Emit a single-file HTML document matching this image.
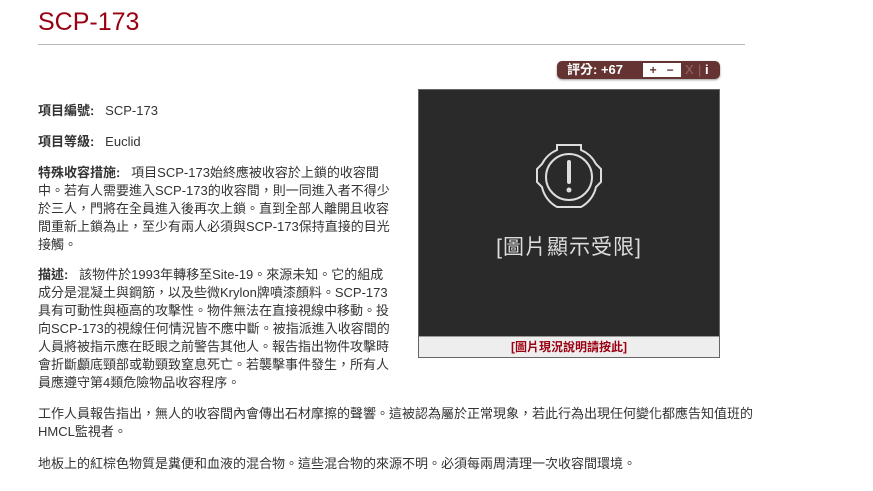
<!DOCTYPE html>
<html><head><meta charset="utf-8"><style>
html,body{margin:0;padding:0;width:873px;height:491px;overflow:hidden;background:#fff;}
body{font-family:"Liberation Sans","Noto Sans CJK TC",sans-serif;font-size:13px;color:#333;position:relative;}
h1{position:absolute;left:38px;top:6px;margin:0;font-weight:normal;font-size:25px;color:#901;line-height:32px;}
.rule{position:absolute;left:38px;top:44px;width:707px;height:1px;background:#bbb;}
.rate{position:absolute;left:557px;top:61px;width:163px;height:18px;background:#633;border-radius:5px;color:#fff;font-weight:bold;font-size:13px;line-height:18px;box-shadow:0 1px 2px #999;}
.rate .l{position:absolute;left:10px;top:0;}
.pmb{position:absolute;left:86px;top:2px;width:38px;height:14px;background:#fff;color:#633;font-size:12px;line-height:14px;}
.x{position:absolute;left:128px;top:0;color:#966;font-weight:normal;}
.i{position:absolute;left:148px;top:0;}
.img{position:absolute;left:418px;top:89px;width:300px;height:267px;border:1px solid #666;background:#2a2a2a;}
.cap{position:absolute;left:0;bottom:0;width:300px;height:20px;background:#eee;border-top:1px solid #999;text-align:center;color:#901;font-weight:bold;font-size:12px;line-height:20px;}
.ptxt{position:absolute;left:0;top:141px;width:300px;text-align:center;color:#ddd;font-size:21px;letter-spacing:1px;}
p{position:absolute;left:38px;margin:0;line-height:18px;white-space:nowrap;}
b{color:#333;}
</style></head><body>
<h1>SCP-173</h1>
<div class="rule"></div>
<div class="rate"><span class="l">評分: +67</span><div class="pmb">&nbsp; + &nbsp;&nbsp;−</div><span class="x">X</span><span style="position:absolute;left:141px;color:#966;font-weight:normal">|</span><span class="i">i</span></div>
<div class="img">
<svg style="position:absolute;left:117px;top:54px" width="66" height="66" viewBox="0 0 66 66" fill="none" stroke="#ddd" stroke-width="2">
<path d="M21 6 L21 1 L45 1 L45 6 A30 30 0 0 1 60 20 L65 25 L65 38 L60 43 A30 30 0 0 1 45 63 L21 63 A30 30 0 0 1 6 43 L1 38 L1 25 L6 20 A30 30 0 0 1 21 6 Z"/>
<circle cx="33" cy="33" r="23"/>
<path d="M33 18 L33 38" stroke-width="4" stroke-linecap="round"/>
<circle cx="33" cy="46" r="2.5" fill="#ddd" stroke="none"/>
</svg>
<div class="ptxt">[圖片顯示受限]</div>
<div class="cap">[圖片現況說明請按此]</div>
</div>
<p style="top:102px"><b>項目編號:</b>&nbsp;&nbsp; SCP-173</p>
<p style="top:133px"><b>項目等級:</b>&nbsp;&nbsp; Euclid</p>
<p style="top:164px"><b>特殊收容措施:</b>&nbsp;&nbsp; 項目SCP-173始終應被收容於上鎖的收容間<br>中。若有人需要進入SCP-173的收容間，則一同進入者不得少<br>於三人，門將在全員進入後再次上鎖。直到全部人離開且收容<br>間重新上鎖為止，至少有兩人必須與SCP-173保持直接的目光<br>接觸。</p>
<p style="top:266px"><b>描述:</b>&nbsp;&nbsp; 該物件於1993年轉移至Site-19。來源未知。它的組成<br>成分是混凝土與鋼筋，以及些微Krylon牌噴漆顏料。SCP-173<br>具有可動性與極高的攻擊性。物件無法在直接視線中移動。投<br>向SCP-173的視線任何情況皆不應中斷。被指派進入收容間的<br>人員將被指示應在眨眼之前警告其他人。報告指出物件攻擊時<br>會折斷顱底頸部或勒頸致窒息死亡。若襲擊事件發生，所有人<br>員應遵守第4類危險物品收容程序。</p>
<p style="top:405px">工作人員報告指出，無人的收容間內會傳出石材摩擦的聲響。這被認為屬於正常現象，若此行為出現任何變化都應告知值班的<br>HMCL監視者。</p>
<p style="top:455px">地板上的紅棕色物質是糞便和血液的混合物。這些混合物的來源不明。必須每兩周清理一次收容間環境。</p>
</body></html>
